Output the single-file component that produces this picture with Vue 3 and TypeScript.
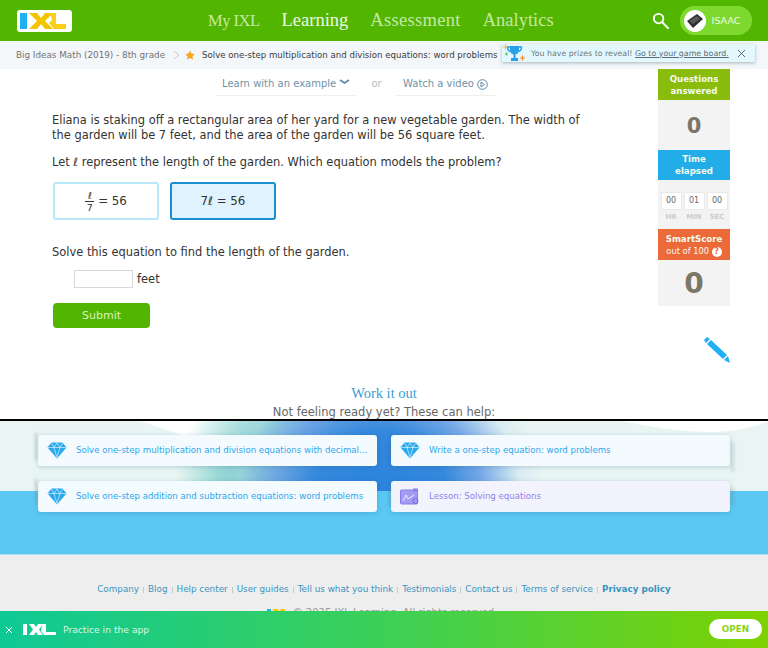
<template>
  <div class="page">
    <header class="topbar">
      <div class="logo">
        <svg width="52" height="22" viewBox="0 0 52 22">
          <rect x="3" y="3" width="7" height="16" fill="#1eb0f0" />
          <polygon points="12,3 20,3 24,8 28,3 36,3 28,11 36,19 28,19 24,14 20,19 12,19 20,11" fill="#f5c400" />
          <polygon points="33,3 39,3 39,14 49,14 49,19 37,19 32,13 35,10" fill="#f9cf1a" />
        </svg>
      </div>
      <nav class="nav">
        <a v-for="item in navItems" :key="item" :class="{ active: item === 'Learning' }">{{ item }}</a>
      </nav>
      <svg class="search" width="17" height="17" viewBox="0 0 18 18" fill="none" stroke="#fff" stroke-width="2">
        <circle cx="7" cy="7" r="5" />
        <path d="M11 11l6 6" stroke-linecap="round" />
      </svg>
      <div class="user">
        <span class="avatar">
          <svg width="18" height="16" viewBox="0 0 18 16">
            <polygon points="1,8 11,1 17,6 7,15" fill="#2f2f2f" />
            <polygon points="3,8 11,3 14,6 7,11" fill="#5a5a5a" />
          </svg>
        </span>
        ISAAC
      </div>
    </header>

    <div class="crumbs">
      <span class="course">Big Ideas Math (2019) - 8th grade</span>
      <svg class="crumb-arrow" width="7" height="10" viewBox="0 0 7 10" fill="none" stroke="#c4c8cc">
        <path d="M1 1l5 4-5 4" />
      </svg>
      <svg class="star" width="10" height="10" viewBox="0 0 20 20"><polygon points="10,1 13,7 19,8 15,13 16,19 10,16 4,19 5,13 1,8 7,7" fill="#f6a623" /></svg>
      <span class="skill">Solve one-step multiplication and division equations: word problems</span>
      <div class="prize">
        <svg class="trophy" width="22" height="20" viewBox="0 0 22 20">
          <path d="M0 4h5M2.500 1.500v5" stroke="#f6c026" stroke-width="1.200" />
          <path d="M17 15h5M19.500 12.500v5" stroke="#f58a2c" stroke-width="1.200" />
          <path d="M2 11h3M3.500 9.500v3" stroke="#4fc36a" stroke-width="1.200" />
          <path d="M7 3h9v4a4.500 4.500 0 0 1-9 0z" fill="#2aa0e6" />
          <path d="M7 4H4.500c0 3 1 4 3 4.500M16 4h2.500c0 3-1 4-3 4.500" fill="none" stroke="#2aa0e6" stroke-width="1.500" />
          <rect x="10.500" y="11" width="2" height="4" fill="#2aa0e6" />
          <rect x="8" y="15" width="7" height="3" fill="#2aa0e6" />
        </svg>
        <span>You have prizes to reveal! <u>Go to your game board.</u></span>
        <svg class="prize-x" width="9" height="9" viewBox="0 0 9 9" stroke="#667" stroke-width="1"><path d="M1 1l7 7M8 1L1 8" /></svg>
      </div>
    </div>

    <main class="main">
      <div class="work">
        <section class="question">
          <div class="helpers">
            <a class="helper learn">Learn with an example
              <svg width="11" height="6" viewBox="0 0 11 6" fill="none" stroke="#5d8aa3" stroke-width="1.600"><path d="M1 1l4.500 3L10 1" /></svg>
            </a>
            <span class="or">or</span>
            <a class="helper video">Watch a video
              <svg width="11" height="11" viewBox="0 0 11 11" fill="none" stroke="#5d8aa3"><circle cx="5.500" cy="5.500" r="4.800" /><path d="M4 3l3.500 2.500L4 8z" /></svg>
            </a>
          </div>
          <p class="text first">Eliana is staking off a rectangular area of her yard for a new vegetable garden. The width of<br />the garden will be 7 feet, and the area of the garden will be 56 square feet.</p>
          <p class="text let">Let <i>ℓ</i> represent the length of the garden. Which equation models the problem?</p>
          <div class="options">
            <div class="option">
              <span class="frac"><i>ℓ</i><b></b>7</span>
              <span>= 56</span>
            </div>
            <div class="option selected"><span>7<i>ℓ</i> = 56</span></div>
          </div>
          <p class="text solve">Solve this equation to find the length of the garden.</p>
          <div class="answer">
            <input class="box" type="text" />
            <span>feet</span>
          </div>
          <button class="submit">Submit</button>
        </section>

        <aside class="side">
          <div class="head green">Questions<br />answered</div>
          <div class="stat count">0</div>
          <div class="head blue">Time<br />elapsed</div>
          <div class="stat timer">
            <div v-for="t in timer" :key="t.label" class="cell">
              <span class="digit">{{ t.value }}</span>
              <span class="unit">{{ t.label }}</span>
            </div>
          </div>
          <div class="head orange">SmartScore<br /><small>out of 100 <em>?</em></small></div>
          <div class="stat score">0</div>
          <svg class="pencil" width="28" height="28" viewBox="0 0 28 28">
            <polygon points="4,1 1,4 3,7 7,3" fill="#1fb0f6" />
            <polygon points="8,4 4,8 20,23 24,19" fill="#1fb0f6" />
            <polygon points="21,24 25,20 27,27" fill="#1fb0f6" />
          </svg>
        </aside>
      </div>

      <div class="workout">
        <h2>Work it out</h2>
        <p>Not feeling ready yet? These can help:</p>
      </div>
    </main>

    <section class="recs">
      <svg class="wave" width="768" height="20" viewBox="0 0 768 20">
        <path d="M140 0L182 14L270 14L270 0z" fill="#fff" />
        <path d="M622 0C660 8 690 11 712 11C735 11 752 6 768 1V0z" fill="#fff" />
      </svg>
      <div class="glow"></div>
      <div class="rec-grid">
        <a v-for="rec in recs" :key="rec.title" class="rec" :class="{ lesson: rec.lesson }">
          <svg v-if="!rec.lesson" width="20" height="17" viewBox="0 0 20 17">
            <polygon points="4.500,0.500 15.500,0.500 19.500,5.500 10,16.500 0.500,5.500" fill="#2aa9ec" />
            <path d="M1 5.500h18M4.500 1l2.500 4.500L10 15.500l3-10L15.500 1M7 5.500L10 1l3 4.500" fill="none" stroke="#d5f1ff" stroke-width="0.700" />
          </svg>
          <svg v-else width="20" height="17" viewBox="0 0 20 17">
            <rect x="0.500" y="2" width="17" height="14" rx="1" fill="#a49cf2" stroke="#867dea" />
            <rect x="13" y="0.500" width="5" height="3" fill="#867dea" />
            <path d="M3 13l3-6 2 4 6-4" fill="none" stroke="#efeeff" />
            <circle cx="15.500" cy="13" r="2.500" fill="#a49cf2" stroke="#6f66e0" />
          </svg>
          <span>{{ rec.title }}</span>
        </a>
      </div>
    </section>

    <footer class="footer">
      <div class="links">
        <template v-for="(link, i) in links" :key="link">
          <i v-if="i > 0" class="sep"></i>
          <a :class="{ strong: link === 'Privacy policy' }">{{ link }}</a>
        </template>
      </div>
      <div class="copy">
        <svg width="20" height="10" viewBox="0 0 20 10">
          <rect x="0" y="2" width="4" height="8" fill="#1eb0f0" />
          <polygon points="5,2 10,2 12,4 14,2 19,2 15,6 19,10 5,10 9,6" fill="#f5c400" />
        </svg>
        <span>© 2025 IXL Learning. All rights reserved.</span>
      </div>
    </footer>

    <div class="appbar">
      <svg width="8" height="8" viewBox="0 0 8 8" stroke="#fff"><path d="M1 1l6 6M7 1L1 7" /></svg>
      <svg class="app-logo" width="33" height="11" viewBox="0 0 33 11">
        <rect x="0" y="0" width="4" height="11" fill="#fff" />
        <polygon points="6,0 11,0 13,3 15,0 20,0 16,5.500 20,11 15,11 13,8 11,11 6,11 10,5.500" fill="#fff" />
        <polygon points="19,0 23,0 23,8 33,8 33,11 21,11 18,7" fill="#fff" />
      </svg>
      <span class="app-text">Practice in the app</span>
      <span class="open">OPEN</span>
    </div>
  </div>
</template>

<script setup lang="ts">
const navItems: string[] = ['My IXL', 'Learning', 'Assessment', 'Analytics']

const timer = [
  { value: '00', label: 'HR' },
  { value: '01', label: 'MIN' },
  { value: '00', label: 'SEC' },
]

const recs: { title: string; lesson?: boolean }[] = [
  { title: 'Solve one-step multiplication and division equations with decimal…' },
  { title: 'Write a one-step equation: word problems' },
  { title: 'Solve one-step addition and subtraction equations: word problems' },
  { title: 'Lesson: Solving equations', lesson: true },
]

const links: string[] = [
  'Company',
  'Blog',
  'Help center',
  'User guides',
  'Tell us what you think',
  'Testimonials',
  'Contact us',
  'Terms of service',
  'Privacy policy',
]
</script>

<style>
html,
body {
  margin: 0;
  overflow: hidden;
}
</style>

<style scoped>
.page {
  width: 768px;
  height: 648px;
  overflow: hidden;
  font-family: "DejaVu Sans", Verdana, sans-serif;
  color: #333;
}

.topbar {
  height: 41px;
  background: #52b500;
  display: flex;
  align-items: center;
}

.logo {
  width: 55px;
  height: 22px;
  margin-left: 17px;
  background: #fff;
  border-radius: 3px;
}

.nav {
  display: flex;
  align-items: baseline;
  gap: 22px;
  margin-left: 136px;
  font-family: "Liberation Serif", serif;
  font-size: 18.500px;
  color: #c4e8a5;
}

.nav a:first-child {
  font-size: 16.500px;
  letter-spacing: -0.500px;
}

.nav a:nth-child(3) {
  letter-spacing: 0.300px;
}

.nav .active {
  color: #eef9e4;
}

.search {
  margin-left: 98px;
}

.user {
  width: 72px;
  height: 29px;
  box-sizing: border-box;
  margin-left: 11px;
  padding-left: 4px;
  background: #7ed92f;
  border-radius: 15px;
  display: flex;
  align-items: center;
  gap: 6px;
  font-size: 9.500px;
  color: #eef9e4;
}

.avatar {
  width: 22px;
  height: 22px;
  background: #fff;
  border-radius: 50%;
  display: flex;
  align-items: center;
  justify-content: center;
}

.crumbs {
  position: relative;
  height: 28px;
  background: #f3f7fa;
  display: flex;
  align-items: center;
  padding-left: 16px;
  font-size: 8.800px;
  white-space: nowrap;
}

.course {
  color: #737373;
}

.crumb-arrow {
  margin: 0 5px 0 8px;
}

.star {
  margin-bottom: 1px;
}

.skill {
  margin-left: 7px;
  font-size: 8.650px;
  color: #3c3c3c;
}

.prize {
  position: absolute;
  left: 502px;
  top: 3px;
  width: 253px;
  height: 18px;
  background: #e2f8fe;
  box-shadow: 0 1px 3px rgba(60, 80, 90, 0.4);
  display: flex;
  align-items: center;
  font-size: 7.850px;
  color: #6c7a80;
}

.trophy {
  margin: 0 6px 0 1px;
  flex: none;
}

.prize u {
  color: #5c6c74;
}

.prize-x {
  margin-left: 8px;
}

.main {
  height: 350px;
  overflow: hidden;
  background: #fff;
}

.work {
  display: flex;
  height: 316px;
}

.question {
  flex: 1;
  padding-left: 52px;
}

.helpers {
  width: 444px;
  height: 27px;
  padding-left: 164px;
  box-sizing: border-box;
  display: flex;
  align-items: flex-start;
  font-size: 10px;
  color: #6f93a5;
}

.helper {
  height: 27px;
  box-sizing: border-box;
  padding-top: 9px;
  border-bottom: 1px solid #eee;
  display: flex;
  align-items: flex-start;
  gap: 3px;
  white-space: nowrap;
}

.helper svg {
  margin-top: 1px;
}

.learn {
  width: 141px;
  padding-left: 6px;
}

.video {
  width: 99px;
  padding-left: 7px;
}

.or {
  width: 39px;
  padding-top: 9px;
  text-align: center;
  color: #b5bdc2;
}

.text {
  margin: 0;
  font-size: 11.450px;
  line-height: 15px;
  color: #333;
  white-space: nowrap;
}

.first {
  padding-top: 17px;
}

.let {
  margin-top: 12px;
}

.options {
  display: flex;
  gap: 11px;
  margin: 12px 0 0 1px;
}

.option {
  width: 106px;
  height: 38px;
  box-sizing: border-box;
  border: 2px solid #b9e8fb;
  border-radius: 3px;
  display: flex;
  align-items: center;
  justify-content: center;
  gap: 4px;
  font-size: 11.800px;
}

.option.selected {
  border-color: #1a8fd0;
  background: #dff2fd;
}

.frac {
  display: inline-flex;
  flex-direction: column;
  align-items: center;
  font-size: 9.500px;
  line-height: 11px;
}

.frac b {
  width: 9px;
  height: 1px;
  background: #333;
}

.solve {
  margin-top: 25px;
}

.answer {
  display: flex;
  align-items: center;
  gap: 4px;
  margin: 10px 0 0 22px;
  font-size: 11.500px;
}

.box {
  width: 59px;
  height: 18px;
  box-sizing: border-box;
  padding: 0;
  border: 1px solid #d8d8d8;
  background: #fff;
}

.submit {
  display: block;
  width: 97px;
  height: 25px;
  margin: 15px 0 0 1px;
  padding: 0;
  border: 0;
  border-radius: 4px;
  background: #52b500;
  color: #d9f3c2;
  font-family: inherit;
  font-size: 11px;
}

.side {
  width: 72px;
  margin-right: 38px;
  position: relative;
}

.head {
  color: #f4faec;
  font-size: 8.600px;
  font-weight: bold;
  line-height: 12px;
  text-align: center;
}

.green {
  height: 31px;
  padding-top: 4px;
  box-sizing: border-box;
  background: #8abc0e;
}

.blue {
  height: 30px;
  padding-top: 3px;
  box-sizing: border-box;
  background: #22ade8;
}

.orange {
  height: 31px;
  padding-top: 4px;
  box-sizing: border-box;
  background: #ec6a39;
}

.orange small {
  font-size: 8.300px;
  font-weight: normal;
}

.orange em {
  display: inline-block;
  width: 10px;
  height: 10px;
  border-radius: 50%;
  background: #fff;
  color: #ec6a39;
  font-style: normal;
  font-weight: bold;
  font-size: 8px;
  line-height: 10px;
}

.stat {
  background: #f3f3f3;
  display: flex;
  align-items: center;
  justify-content: center;
  color: #7b7668;
  font-weight: bold;
}

.count {
  height: 50px;
  padding-top: 1px;
  box-sizing: border-box;
  font-size: 21px;
}

.timer {
  height: 49px;
  gap: 2px;
  box-sizing: border-box;
  align-items: flex-start;
  padding-top: 12px;
}

.cell {
  display: flex;
  flex-direction: column;
  align-items: center;
  gap: 2px;
  font-weight: normal;
}

.digit {
  width: 21px;
  height: 18px;
  box-sizing: border-box;
  border: 1px solid #eaeaea;
  background: #fff;
  color: #666;
  font-size: 8px;
  line-height: 16px;
  text-align: center;
}

.unit {
  color: #ccc;
  font-size: 7px;
  font-weight: bold;
  line-height: 10px;
}

.score {
  height: 46px;
  font-size: 28px;
}

.pencil {
  position: absolute;
  right: -1px;
  top: 267px;
}

.workout {
  text-align: center;
}

.workout h2 {
  margin: 0;
  font-family: "Liberation Serif", serif;
  font-size: 14.500px;
  line-height: 16px;
  font-weight: normal;
  color: #3a9fd0;
}

.workout p {
  margin: 4px 0 0;
  font-size: 11.500px;
  line-height: 14px;
  color: #666;
}

.recs {
  position: relative;
  height: 136px;
  border-top: 2px solid #000;
  border-bottom: 1px solid #a9def5;
  box-sizing: border-box;
  background: linear-gradient(#e8f5f2, #e8f5f2) 0 0 / 100% 70px no-repeat, #5bc8f3;
}

.wave {
  position: absolute;
  left: 0;
  top: 0;
}

.glow {
  position: absolute;
  left: 0;
  top: 0;
  width: 100%;
  height: 70px;
  background:
    radial-gradient(ellipse 165px 150px at 380px 70px, #2b84dc 0, #3488dc 40%, rgba(105, 160, 230, 0.9) 62%, rgba(190, 220, 240, 0.35) 85%, rgba(190, 220, 240, 0) 100%),
    radial-gradient(ellipse 115px 130px at 290px 70px, #63c3c4 0, rgba(110, 200, 198, 0.8) 55%, rgba(125, 205, 200, 0) 100%);
}

.rec-grid {
  position: relative;
  display: grid;
  grid-template-columns: 339px 339px;
  gap: 15px 14px;
  padding: 14px 0 0 38px;
}

.rec {
  position: relative;
  height: 31px;
  box-sizing: border-box;
  padding: 0 12px 1px 9px;
  background: #f3fbff;
  border-radius: 3px;
  box-shadow: 0 1px 4px rgba(40, 90, 130, 0.25);
  display: flex;
  align-items: center;
  gap: 9px;
  font-size: 8.620px;
  color: #2fa6ec;
}

.rec:nth-child(odd)::before {
  content: "";
  position: absolute;
  left: -4px;
  top: -2px;
  width: 4px;
  height: 27px;
  background: rgba(120, 120, 120, 0.16);
  filter: blur(1px);
}

.rec:nth-child(even)::before {
  content: "";
  position: absolute;
  left: -3px;
  top: 7px;
  width: 3px;
  height: 18px;
  background: rgba(90, 90, 90, 0.14);
  filter: blur(1px);
}

.rec:nth-child(even)::after {
  content: "";
  position: absolute;
  right: -5px;
  top: 7px;
  width: 5px;
  height: 30px;
  background: rgba(120, 120, 120, 0.14);
  filter: blur(1px);
}

.rec:nth-child(3)::before {
  height: 24px;
}

.rec:nth-child(4)::after {
  height: 17px;
}

.rec svg {
  flex: none;
}

.rec span {
  white-space: nowrap;
}

.lesson {
  background: #f3f3fe;
  color: #8d84ec;
}

.footer {
  height: 93px;
  background: #eee;
  text-align: center;
}

.links {
  padding-top: 28px;
  display: flex;
  justify-content: center;
  align-items: center;
  gap: 4px;
  font-size: 8.800px;
  line-height: 12px;
  color: #3a94bf;
}

.sep {
  width: 1px;
  height: 6px;
  margin-top: 2px;
  background: #c9c9c9;
}

.strong {
  font-weight: bold;
}

.copy {
  display: flex;
  justify-content: center;
  align-items: flex-start;
  gap: 6px;
  margin-top: 12px;
  padding-right: 4px;
  font-size: 10px;
  line-height: 12px;
  color: #999;
}

.appbar {
  position: fixed;
  left: 0;
  right: 0;
  bottom: 0;
  height: 37px;
  background: linear-gradient(90deg, #0fc995, #3cd058 50%, #7dd200);
  display: flex;
  align-items: center;
  padding-left: 5px;
  box-sizing: border-box;
  font-size: 9.200px;
  color: #d8f7e4;
}

.app-logo {
  margin-left: 10px;
}

.app-text {
  margin-left: 7px;
}

.open {
  position: absolute;
  left: 709px;
  top: 8px;
  width: 53px;
  height: 20px;
  border-radius: 10px;
  background: #fff;
  color: #86d417;
  font-weight: bold;
  font-size: 8.800px;
  line-height: 20px;
  text-align: center;
}
</style>
